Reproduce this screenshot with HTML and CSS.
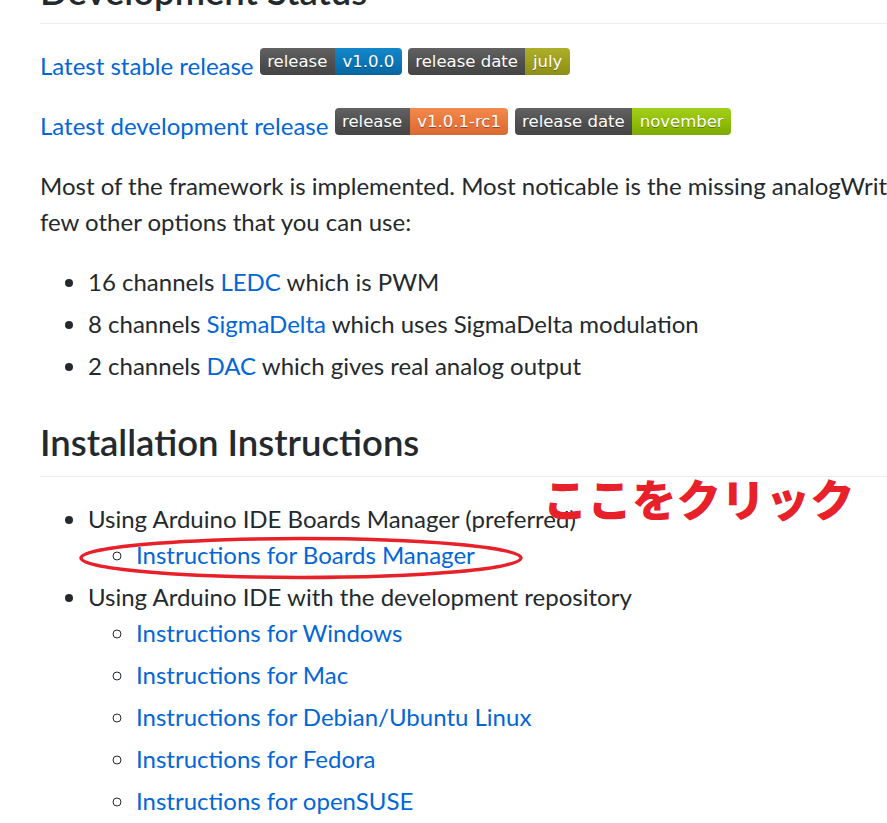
FILE: index.html
```html
<!DOCTYPE html>
<html lang="ja">
<head>
<meta charset="utf-8">
<link rel="stylesheet" href="styles.css">
</head>
<body>
<div class="page">
  <h2 class="heading heading-cut">Development Status</h2>
  <p><a href="#">Latest stable release</a> <span class="badge"><span class="seg seg-label">release</span><span class="seg seg-blue">v1.0.0</span></span> <span class="badge"><span class="seg seg-label">release date</span><span class="seg seg-olive">july</span></span></p>
  <p><a href="#">Latest development release</a> <span class="badge"><span class="seg seg-label">release</span><span class="seg seg-orange">v1.0.1-rc1</span></span> <span class="badge"><span class="seg seg-label">release date</span><span class="seg seg-green">november</span></span></p>
  <p>Most of the framework is implemented. Most noticable is the missing analogWrite. While analogWrite is on it's way, there are a<br>few other options that you can use:</p>
  <ul>
    <li>16 channels <a href="#">LEDC</a> which is PWM</li>
    <li>8 channels <a href="#">SigmaDelta</a> which uses SigmaDelta modulation</li>
    <li>2 channels <a href="#">DAC</a> which gives real analog output</li>
  </ul>
  <h2 class="heading">Installation Instructions</h2>
  <ul>
    <li>Using Arduino IDE Boards Manager (preferred)
      <ul>
        <li><a href="#">Instructions for Boards Manager</a></li>
      </ul>
    </li>
    <li>Using Arduino IDE with the development repository
      <ul>
        <li><a href="#">Instructions for Windows</a></li>
        <li><a href="#">Instructions for Mac</a></li>
        <li><a href="#">Instructions for Debian/Ubuntu Linux</a></li>
        <li><a href="#">Instructions for Fedora</a></li>
        <li><a href="#">Instructions for openSUSE</a></li>
      </ul>
    </li>
  </ul>
  <div class="note">ここをクリック</div>
  <svg class="ring" width="446" height="44" viewBox="0 0 446 44"><ellipse cx="223" cy="22" rx="220" ry="19.5" fill="none" stroke="#e8202a" stroke-width="3.5"/></svg>
</div>
</body>
</html>
```
FILE: styles.css
```css
html, body { margin: 0; padding: 0; background: #fff; }
body {
  font-family: "Lato", "Liberation Sans", sans-serif;
  font-size: 24px;
  line-height: 1.5;
  color: #24292e;
  overflow: hidden;
}
.page {
  position: relative;
  display: flow-root;
  padding: 0 0 0 40px;
  width: 1400px;
}
a { color: #0366d6; text-decoration: none; }
p { margin: 0 0 24px; white-space: nowrap; }
.heading {
  font-size: 36.5px;
  font-weight: 600;
  line-height: 1.25;
  margin: 36px 0 24px;
  padding-bottom: 11px;
  border-bottom: 1.5px solid #eaecef;
}
.heading-cut { margin-top: -31px; padding-bottom: 8px; }
ul { margin: 0 0 24px; padding-left: 48px; }
ul ul { margin: 0; list-style-type: circle; }
li + li { margin-top: 6px; }
.badge {
  display: inline-block;
  overflow: hidden;
  border-radius: 4px;
  height: 27px;
  vertical-align: 0;
  font-family: "DejaVu Sans", Verdana, sans-serif;
  font-size: 16.5px;
  line-height: 27px;
  color: #fff;
  text-shadow: 0 1px 0 rgba(1,1,1,0.35);
  white-space: nowrap;
}
.seg { display: inline-block; height: 27px; padding: 0 7.5px; vertical-align: top; }
.seg-label { background: linear-gradient(#626262, #4f4f4f 55%, #454545); }
.seg-blue { background: linear-gradient(#1487c9, #0a76b8 55%, #08669f); }
.seg-olive { background: linear-gradient(#adae2a, #9d9e1c 55%, #8c8d16); }
.seg-orange { background: linear-gradient(#f28a4d, #e8763b 55%, #d86a33); }
.seg-green { background: linear-gradient(#a2cf1c, #8fbd06 55%, #7ea800); }
.note {
  position: absolute;
  left: 543px;
  top: 468px;
  font-family: "Noto Sans CJK JP", sans-serif;
  font-weight: 900;
  font-size: 44.5px;
  line-height: 60px;
  color: #e8202a;
  white-space: nowrap;
}
.ring {
  position: absolute;
  left: 78px;
  top: 536px;
}
```
